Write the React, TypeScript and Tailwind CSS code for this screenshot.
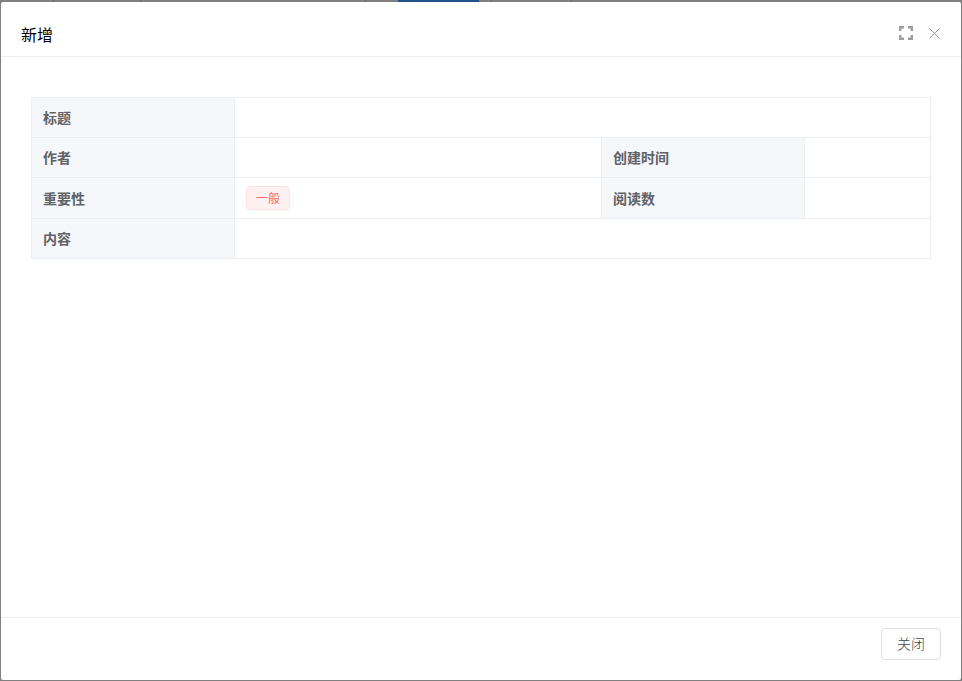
const labelClass =
  'border border-[#ebeef5] bg-[#f5f7fa] px-[11px] pt-px text-left align-middle text-sm font-bold text-[#606266]'
const valueClass = 'border border-[#ebeef5] px-[11px] align-middle text-sm text-[#606266]'

function FullscreenIcon() {
  return (
    <svg width="14" height="14" viewBox="0 0 14 14" fill="none" stroke="#9a9da3" strokeWidth="2.4">
      <path d="M1.2 5V1.2H5M9 1.2h3.8V5M12.8 9v3.8H9M5 12.8H1.2V9" />
    </svg>
  )
}

function CloseIcon() {
  return (
    <svg width="11" height="11" viewBox="0 0 11 11" fill="none" stroke="#909399" strokeWidth="1">
      <path d="M0.5 0.5l10 10M10.5 0.5l-10 10" />
    </svg>
  )
}

export default function App() {
  return (
    <div
      className="flex h-[681px] w-[962px] flex-col overflow-hidden bg-[#808080]"
      style={{ fontFamily: '"Liberation Sans", "Noto Sans CJK SC", sans-serif' }}
    >
      {/* page behind the overlay, only a sliver shows above the dialog */}
      <div className="flex h-[2px] shrink-0">
        <div className="ml-[53px] w-px bg-[#6e6e6e]" />
        <div className="ml-[86px] w-px bg-[#6e6e6e]" />
        <div className="ml-[224px] w-px bg-[#6e6e6e]" />
        <div className="ml-[32px] w-[81px] bg-[#1f5488]" />
        <div className="ml-[12px] w-px bg-[#6e6e6e]" />
        <div className="ml-[79px] w-px bg-[#6e6e6e]" />
      </div>

      <div className="mx-px mb-px flex min-h-0 flex-1 flex-col rounded-[2px] bg-white">
        <header className="flex h-[55px] shrink-0 items-start justify-between border-b border-[#ebeef5] pl-5 pr-[21px] pt-[22px]">
          <h1 className="text-base leading-6 text-black">新增</h1>
          <div className="mt-[2px] flex items-center gap-[16px]">
            <FullscreenIcon />
            <CloseIcon />
          </div>
        </header>

        <main className="min-h-0 flex-1 px-[30px] pt-10">
          <table className="h-[162px] w-[899px] table-fixed border-collapse">
            <colgroup>
              <col className="w-[203px]" />
              <col className="w-[367px]" />
              <col className="w-[203px]" />
              <col className="w-[126px]" />
            </colgroup>
            <tbody>
              <tr className="h-10">
                <th className={labelClass}>标题</th>
                <td className={valueClass} colSpan={3} />
              </tr>
              <tr className="h-10">
                <th className={labelClass}>作者</th>
                <td className={valueClass} />
                <th className={labelClass}>创建时间</th>
                <td className={valueClass} />
              </tr>
              <tr className="h-[41px]">
                <th className={labelClass}>重要性</th>
                <td className={valueClass}>
                  <span className="inline-flex h-6 items-center rounded border border-[#fde2e2] bg-[#fef0f0] px-[9px] pt-[2px] text-xs text-[#f56c6c]">
                    一般
                  </span>
                </td>
                <th className={labelClass}>阅读数</th>
                <td className={valueClass} />
              </tr>
              <tr className="h-10">
                <th className={labelClass}>内容</th>
                <td className={valueClass} colSpan={3} />
              </tr>
            </tbody>
          </table>
        </main>

        <footer className="flex h-[63px] shrink-0 items-start justify-end border-t border-[#ebeef5] pr-5 pt-[10px]">
          <button className="h-8 w-[60px] rounded border border-[#dcdfe6] bg-white text-sm font-light text-[#45474b]">
            关闭
          </button>
        </footer>
      </div>
    </div>
  )
}
